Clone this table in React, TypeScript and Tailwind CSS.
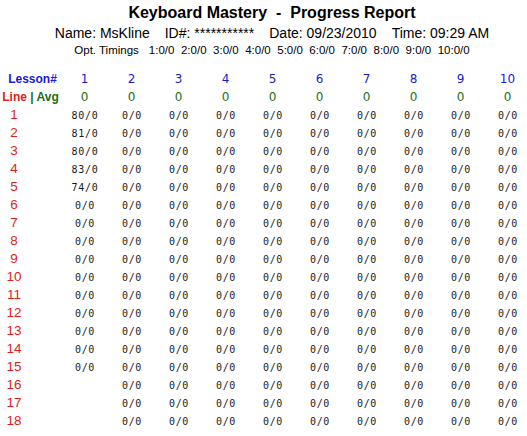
import React from 'react';

const lessons = [1, 2, 3, 4, 5, 6, 7, 8, 9, 10];
const firstLesson = ['80/0', '81/0', '80/0', '83/0', '74/0'];

// score for a given line / lesson
function cell(line: number, lesson: number) {
  if (lesson === 1) {
    if (line <= 5) return firstLesson[line - 1];
    if (line <= 15) return '0/0';
    return '';
  }
  return '0/0';
}

export default function App() {
  const lines = Array.from({ length: 18 }, (_, i) => i + 1);

  return (
    <div className="w-[527px] h-[436px] overflow-hidden bg-white font-['Liberation_Sans',Arial,sans-serif] text-black">
      {/* Header */}
      <div className="pl-[17px] pt-[3px] text-center">
        <h1 className="text-[16px] leading-[20px] font-bold">
          Keyboard Mastery&nbsp; -&nbsp; Progress Report
        </h1>
        <div className="mt-[1px] flex justify-center gap-[15px] text-[14px] leading-[18px]">
          <span>Name: MsKline</span>
          <span>ID#: ***********</span>
          <span>Date: 09/23/2010</span>
          <span>Time: 09:29 AM</span>
        </div>
        <div className="flex justify-center text-[11.5px] leading-[16px]">
          <span className="mr-[10px]">Opt. Timings</span>
          <div className="flex gap-[6.5px]">
            {lessons.map((n) => (
              <span key={n}>
                {n}:0/0
              </span>
            ))}
          </div>
        </div>
      </div>

      {/* Table */}
      <div className="mt-[12px]">
        <div className="flex h-[18px] items-center">
          <div className="w-[61px] shrink-0 pl-[4px] text-center text-[12px] font-bold text-[#1a1ad2]">
            Lesson#
          </div>
          {lessons.map((n) => (
            <div
              key={n}
              className="w-[47px] shrink-0 text-center font-['DejaVu_Sans',sans-serif] text-[12px] text-[#1a1ad2]"
            >
              {n}
            </div>
          ))}
        </div>

        <div className="flex h-[18px] items-center">
          <div className="w-[61px] shrink-0 text-center text-[12px] font-bold whitespace-nowrap">
            <span className="text-[#e02020]">Line</span>
            <span className="text-[#1a6e1a]"> | Avg</span>
          </div>
          {lessons.map((n) => (
            <div
              key={n}
              className="w-[47px] shrink-0 text-center font-['DejaVu_Sans',sans-serif] text-[12px] text-[#1a6e1a]"
            >
              0
            </div>
          ))}
        </div>

        {lines.map((line) => (
          <div key={line} className="flex h-[18px] items-center">
            <div className="w-[61px] shrink-0">
              <div className="w-[28px] text-center text-[13.5px] text-[#e01c1c]">{line}</div>
            </div>
            {lessons.map((n) => (
              <div
                key={n}
                className="w-[47px] shrink-0 pl-[1px] text-center font-['DejaVu_Sans_Mono',monospace] text-[10px] tracking-[0.7px] text-[#1a1a1a]"
              >
                {cell(line, n)}
              </div>
            ))}
          </div>
        ))}
      </div>
    </div>
  );
}
